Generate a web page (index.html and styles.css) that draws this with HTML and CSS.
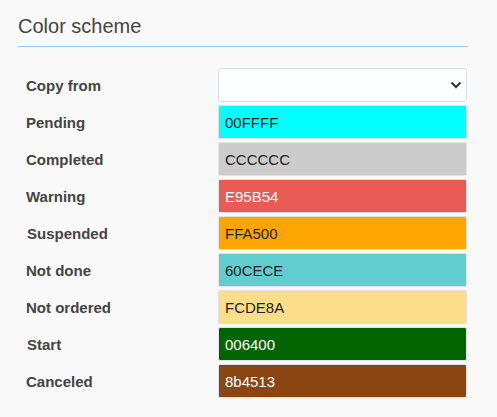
FILE: index.html
```html
<!DOCTYPE html>
<html lang="en">
<head>
    <meta charset="UTF-8">
    <meta name="viewport" content="width=device-width, initial-scale=1.0">
    <title>Color scheme</title>
    <link rel="stylesheet" href="styles.css">
</head>
<body>
    <div class="panel">
        <h2>Color scheme</h2>

        <form class="scheme-form">
            <label for="copy-from">Copy from</label>
            <div class="select-wrap">
                <select id="copy-from">
                    <option value=""></option>
                </select>
                <svg class="chevron" width="12" height="8" viewBox="0 0 12 8">
                    <path d="M1.5 1.5 L6 6 L10.5 1.5" fill="none" stroke="#333" stroke-width="2"/>
                </svg>
            </div>

            <label for="pending">Pending</label>
            <input type="text" id="pending" class="swatch" value="00FFFF">

            <label for="completed">Completed</label>
            <input type="text" id="completed" class="swatch" value="CCCCCC">

            <label for="warning">Warning</label>
            <input type="text" id="warning" class="swatch light-text" value="E95B54">

            <label for="suspended" class="nudge">Suspended</label>
            <input type="text" id="suspended" class="swatch" value="FFA500">

            <label for="not-done">Not done</label>
            <input type="text" id="not-done" class="swatch" value="60CECE">

            <label for="not-ordered">Not ordered</label>
            <input type="text" id="not-ordered" class="swatch" value="FCDE8A">

            <label for="start" class="nudge">Start</label>
            <input type="text" id="start" class="swatch light-text" value="006400">

            <label for="canceled">Canceled</label>
            <input type="text" id="canceled" class="swatch light-text" value="8b4513">
        </form>
    </div>
</body>
</html>
```

FILE: styles.css
```css
body {
    margin: 0;
    background: #f9f9f9;
    font-family: "Liberation Sans", Arial, sans-serif;
    color: #444;
}
.panel {
    width: 450px;
    padding: 14px 0 0 18px;
}
h2 {
    margin: 0;
    font-size: 20px;
    line-height: 24px;
    font-weight: normal;
    color: #444;
    padding-bottom: 8px;
    border-bottom: 1px solid #9dcdf4;
}
.scheme-form {
    display: grid;
    grid-template-columns: 192px 249px;
    row-gap: 3px;
    margin-top: 21px;
    padding-left: 8px;
}
label {
    font-size: 15px;
    font-weight: bold;
    color: #444;
    align-self: center;
}
label.nudge {
    padding-left: 1px;
}
.select-wrap {
    position: relative;
    height: 34px;
}
select {
    -webkit-appearance: none;
    appearance: none;
    width: 100%;
    height: 34px;
    margin: 0;
    border: 1px solid #dde0e3;
    border-radius: 3px;
    background: #fcfdff;
    font-family: inherit;
    font-size: 15px;
}
.chevron {
    position: absolute;
    right: 5px;
    top: 13px;
}
.swatch {
    box-sizing: border-box;
    width: 100%;
    height: 34px;
    margin: 0;
    padding: 0 6px;
    border: 1px solid #e2e2e2;
    border-radius: 2px;
    font-family: inherit;
    font-size: 15px;
    color: #222;
}
.swatch.light-text {
    color: #fff;
}
#pending { background: #00ffff; }
#completed { background: #cccccc; }
#warning { background: #e95b54; }
#suspended { background: #ffa500; }
#not-done { background: #60cece; }
#not-ordered { background: #fcde8a; }
#start { background: #006400; }
#canceled { background: #8b4513; }
```
